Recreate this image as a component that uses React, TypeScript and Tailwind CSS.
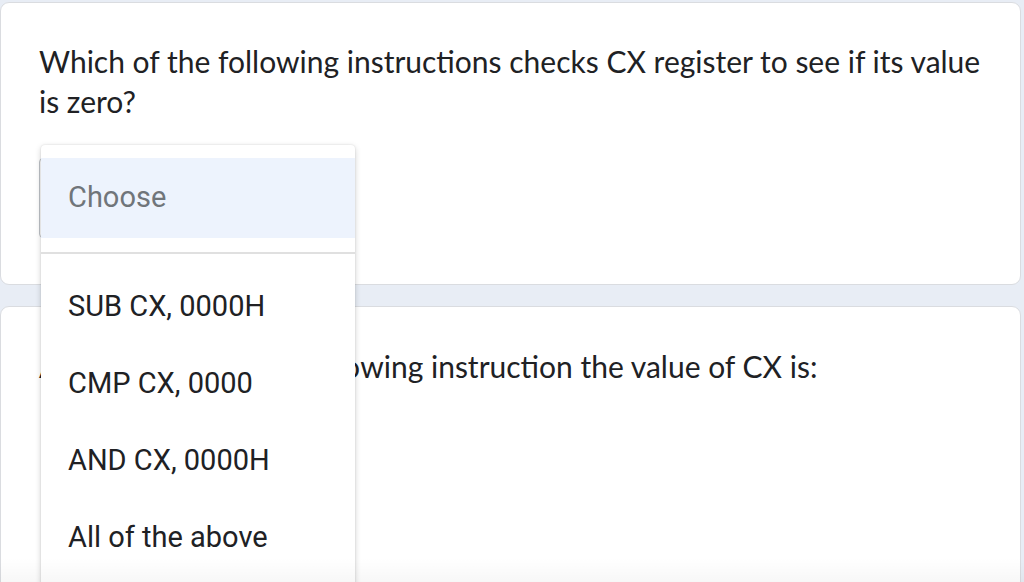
import React from "react";

export default function App() {
  const options = ["SUB CX, 0000H", "CMP CX, 0000", "AND CX, 0000H", "All of the above"];
  return (
    <div className="relative w-[1024px] h-[582px] overflow-hidden bg-[#e8edf5]">
      <div className="flex flex-col gap-[21px] pt-[2px] pr-[3px]">
        <div className="h-[283px] rounded-[9px] border border-[#dadce0] bg-white pl-[38px] pr-[30px] pt-[38px]">
          <p className="text-[30px] leading-[40px] text-[#202124]" style={{ fontFamily: "Lato, sans-serif" }}>
            Which of the following instructions checks CX register to see if its value is zero?
          </p>
          <div className="mt-[37px] h-[80px] w-[316px] rounded-[4px] border border-[#bdc1c6]" />
        </div>
        <div className="h-[300px] rounded-[9px] border border-[#dadce0] bg-white pl-[38px] pr-[30px] pt-[39px]">
          <p className="text-[30px] leading-[40px] text-[#202124]" style={{ fontFamily: "Lato, sans-serif" }}>
            <span className="tracking-[0.1px]">After executing the follo</span>wing instruction the value of CX is:
          </p>
        </div>
      </div>

      <div
        className="absolute left-[41px] top-[145px] w-[314px] h-[460px] rounded-[4px] bg-white pt-[13px] shadow-[0_2px_6px_rgba(0,0,0,0.18),0_0_2px_rgba(0,0,0,0.12)]"
        style={{ fontFamily: "Roboto, sans-serif" }}
      >
        <div className="flex h-[80px] items-center bg-[#edf3fd] pl-[27px] text-[29px] text-[#70757a]">Choose</div>
        <div className="mt-[14px] h-[2px] bg-[#e0e0e0]" />
        <div className="pt-[14px]">
          {options.map((o) => (
            <div key={o} className="flex h-[77px] items-center pl-[27px] text-[29px] text-[#202124]">
              {o}
            </div>
          ))}
        </div>
      </div>
      <div className="pointer-events-none absolute bottom-0 left-0 h-[24px] w-full bg-gradient-to-b from-transparent to-[rgba(0,0,0,0.03)]" />
    </div>
  );
}
